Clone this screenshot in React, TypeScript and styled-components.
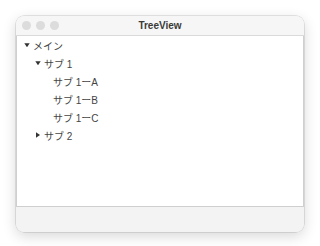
import React from 'react'
import styled, { createGlobalStyle } from 'styled-components'

const Global = createGlobalStyle`
  html, body {
    margin: 0;
    padding: 0;
    background: #ffffff;
  }
  body {
    font-family: "Liberation Sans", "Noto Sans CJK JP", sans-serif;
  }
`

type Node = {
  label: string
  open?: boolean
  children?: Node[]
}

const tree: Node[] = [
  {
    label: 'メイン',
    open: true,
    children: [
      {
        label: 'サブ 1',
        open: true,
        children: [{ label: 'サブ 1ーA' }, { label: 'サブ 1ーB' }, { label: 'サブ 1ーC' }],
      },
      { label: 'サブ 2', open: false, children: [{ label: 'サブ 2ーA' }] },
    ],
  },
]

export default function App() {
  return (
    <>
      <Global />
      <Stage>
        <Window>
          <TitleBar>
            <Lights>
              <Light />
              <Light />
              <Light />
            </Lights>
            <Title>TreeView</Title>
          </TitleBar>
          <Content>
            <TreeList nodes={tree} depth={0} />
          </Content>
          <StatusBar />
        </Window>
      </Stage>
    </>
  )
}

function TreeList({ nodes, depth }: { nodes: Node[]; depth: number }) {
  return (
    <>
      {nodes.map((n) => (
        <React.Fragment key={n.label}>
          <Row depth={depth}>
            <Toggle leaf={!n.children}>
              {n.children ? (
                <svg width="6" height="6" viewBox="0 0 6 6">
                  {n.open ? (
                    <path d="M0.3 1.2 L5.7 1.2 L3 5.2 Z" fill="#333" />
                  ) : (
                    <path d="M1 0.3 L5 3 L1 5.7 Z" fill="#333" />
                  )}
                </svg>
              ) : null}
            </Toggle>
            <Label>{n.label}</Label>
          </Row>
          {n.open && n.children ? <TreeList nodes={n.children} depth={depth + 1} /> : null}
        </React.Fragment>
      ))}
    </>
  )
}

const Stage = styled.div`
  width: 320px;
  height: 246px;
  padding: 16px;
  box-sizing: border-box;
`

const Window = styled.div`
  width: 288px;
  height: 216px;
  border-radius: 8px;
  background: #f3f3f3;
  box-shadow: 0 0 0 0.5px rgba(0, 0, 0, 0.18), 0 4px 14px rgba(0, 0, 0, 0.16);
  overflow: hidden;
  display: flex;
  flex-direction: column;
`

const TitleBar = styled.div`
  height: 19px;
  flex: none;
  position: relative;
  display: flex;
  align-items: center;
  justify-content: center;
  background: #f6f6f6;
  border-bottom: 1px solid #dadada;
`

const Lights = styled.div`
  position: absolute;
  left: 6px;
  top: 5px;
  display: flex;
  gap: 5px;
`

const Light = styled.span`
  width: 9px;
  height: 9px;
  border-radius: 50%;
  background: #dcdcdc;
`

const Title = styled.div`
  font-size: 10px;
  font-weight: 700;
  color: #3a3a3a;
`

const Content = styled.div`
  flex: 1;
  background: #ffffff;
  border: 1px solid #cfcfcf;
  border-top: none;
`

const Row = styled.div<{ depth: number }>`
  height: 18px;
  display: flex;
  align-items: center;
  padding-left: ${(p) => 7 + p.depth * 11}px;
`

const Toggle = styled.span<{ leaf: boolean }>`
  width: ${(p) => (p.leaf ? 7 : 9)}px;
  flex: none;
  display: flex;
  align-items: center;
`

const Label = styled.span`
  font-size: 10px;
  color: #444;
`

const StatusBar = styled.div`
  height: 25px;
  flex: none;
  background: #f3f3f3;
`
